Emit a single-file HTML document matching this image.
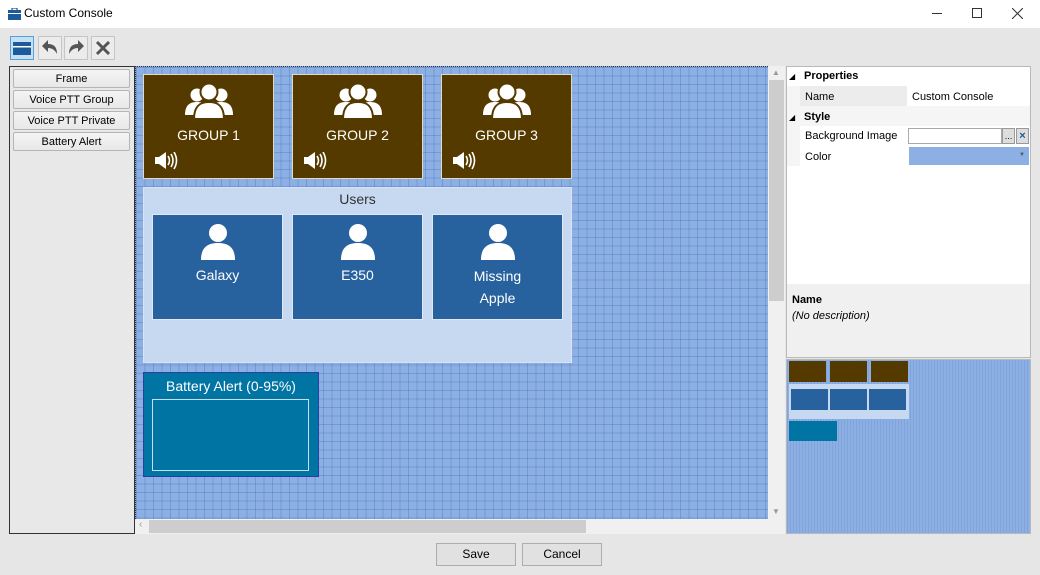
<!DOCTYPE html>
<html><head><meta charset="utf-8"><style>
*{box-sizing:border-box;margin:0;padding:0}
body{width:1040px;height:575px;background:#e6e6e6;font-family:"Segoe UI","Liberation Sans",sans-serif;position:relative;overflow:hidden;font-size:12px;color:#000}
.a{position:absolute}
.btnl{position:absolute;left:13px;width:117px;height:19px;background:linear-gradient(#f4f4f4,#e8e8e8);border:1px solid #b5b5b5;border-radius:2px;font-size:11px;text-align:center;line-height:19px}
.grp{position:absolute;top:74px;width:131px;height:105px;background:#553a00;border:1px solid #e0d8c8;color:#fff;text-align:center}
.grp .t{position:absolute;top:52px;left:0;right:0;font-size:14px}
.usr{position:absolute;top:214px;width:131px;height:106px;background:#27629f;border:1px solid #dfe8f4;color:#fff;text-align:center;font-size:14px}
.tb{position:absolute;top:36px;width:24px;height:24px;border:1px solid #c5c5c5;background:#ececec}
.grid{background-color:#8cb0e3;background-image:linear-gradient(rgba(80,115,195,.4) 1px,transparent 1px),linear-gradient(90deg,rgba(80,115,195,.4) 1px,transparent 1px);background-size:8.5px 8.5px}
.pb{position:absolute;width:80px;height:23px;top:543px;border:1px solid #adadad;background:#e1e1e1;font-size:12px;text-align:center;line-height:21px}
.p{font-size:11px}
</style></head><body>
<div class="a" style="left:0;top:0;width:1040px;height:28px;background:#fff"></div>
<svg class="a" style="left:8px;top:8px" width="13" height="12"><rect x="0" y="2" width="13" height="10" fill="#1d5a9a"/><rect x="4" y="0" width="5" height="3" fill="none" stroke="#1d5a9a" stroke-width="1.2"/><rect x="0" y="5" width="13" height="1" fill="#fff"/></svg>
<div class="a" style="left:24px;top:6px;font-size:12px">Custom Console</div>
<div class="a" style="left:932px;top:13px;width:10px;height:1px;background:#333"></div>
<div class="a" style="left:972px;top:8px;width:10px;height:10px;border:1px solid #333"></div>
<svg class="a" style="left:1012px;top:8px" width="11" height="11"><path d="M0 0L11 11M11 0L0 11" stroke="#333" stroke-width="1.1"/></svg>

<div class="tb" style="left:10px;background:#c4e0f5;border-color:#5a9fd6"><svg width="22" height="22"><rect x="2" y="5" width="18" height="13" fill="#1d5a9a"/><rect x="2" y="9" width="18" height="1.5" fill="#fff"/></svg></div>
<div class="tb" style="left:38px"><svg width="22" height="22"><path d="M3 9L9 3V7C15 7 18 10 18 17C16 13 13 11 9 11V15Z" fill="#555"/></svg></div>
<div class="tb" style="left:64px"><svg width="22" height="22"><path d="M19 9L13 3V7C7 7 4 10 4 17C6 13 9 11 13 11V15Z" fill="#555"/></svg></div>
<div class="tb" style="left:91px"><svg width="22" height="22"><path d="M5 5L17 17M17 5L5 17" stroke="#555" stroke-width="3"/></svg></div>

<div class="a" style="left:9px;top:66px;width:126px;height:468px;border:1px solid #333;background:#e8e8e8"></div>
<div class="btnl" style="top:69px">Frame</div>
<div class="btnl" style="top:90px">Voice PTT Group</div>
<div class="btnl" style="top:111px">Voice PTT Private</div>
<div class="btnl" style="top:132px">Battery Alert</div>

<div class="a grid" style="left:135px;top:66px;width:633px;height:453px;border-top:1px dotted #333;border-left:1px dotted #333"></div>
<div class="a" style="left:768px;top:66px;width:17px;height:453px;background:#f0f0f0"></div>
<div class="a" style="left:769px;top:80px;width:15px;height:221px;background:#cdcdcd"></div>
<div class="a" style="left:135px;top:519px;width:650px;height:15px;background:#f0f0f0"></div>
<div class="a" style="left:149px;top:520px;width:437px;height:13px;background:#cdcdcd"></div>
<div class="a" style="left:139px;top:519px;font-size:10px;color:#999">&lsaquo;</div>
<div class="a" style="left:772px;top:68px;font-size:8px;color:#999">&#9650;</div>
<div class="a" style="left:772px;top:507px;font-size:8px;color:#999">&#9660;</div>

<svg width="0" height="0" style="position:absolute"><defs>
<g id="gi"><circle cx="-12" cy="-5" r="6.5" fill="#fff"/><path d="M-24 15C-24 4-18 2-12 2S0 4 0 15Z" fill="#fff"/><circle cx="12" cy="-5" r="6.5" fill="#fff"/><path d="M0 15C0 4 6 2 12 2S24 4 24 15Z" fill="#fff"/><circle cx="0" cy="-8" r="8.5" stroke="#553a00" stroke-width="2" fill="#fff"/><path d="M-15 19C-15 5-8 2 0 2S15 5 15 19Z" stroke="#553a00" stroke-width="2" fill="#fff"/></g>
<g id="sp"><rect x="0" y="5" width="5" height="7" fill="#fff"/><path d="M4 5L11 0V17L4 12Z" fill="#fff"/><path d="M13 4Q16 8.5 13 13M16 2Q20 8.5 16 15M19 0Q24 8.5 19 17" stroke="#fff" stroke-width="1.6" fill="none"/></g>
<g id="ui"><circle cx="0" cy="-6" r="9" fill="#fff"/><path d="M-17 21C-17 8-10 4 0 4S17 8 17 21Z" fill="#fff"/></g>
</defs></svg>

<div class="grp" style="left:143px"><svg class="a" style="left:39px;top:6px" width="52" height="42"><use href="#gi" x="26" y="19"/></svg><div class="t">GROUP 1</div><svg class="a" style="left:11px;top:77px" width="25" height="18"><use href="#sp"/></svg></div>
<div class="grp" style="left:292px"><svg class="a" style="left:39px;top:6px" width="52" height="42"><use href="#gi" x="26" y="19"/></svg><div class="t">GROUP 2</div><svg class="a" style="left:11px;top:77px" width="25" height="18"><use href="#sp"/></svg></div>
<div class="grp" style="left:441px"><svg class="a" style="left:39px;top:6px" width="52" height="42"><use href="#gi" x="26" y="19"/></svg><div class="t">GROUP 3</div><svg class="a" style="left:11px;top:77px" width="25" height="18"><use href="#sp"/></svg></div>

<div class="a" style="left:143px;top:187px;width:429px;height:176px;background:#c6d9f1;border:1px solid #d8e4f4"></div>
<div class="a" style="left:143px;top:191px;width:429px;text-align:center;font-size:14px;color:#333">Users</div>
<div class="usr" style="left:152px"><svg class="a" style="left:45px;top:4px" width="40" height="46"><use href="#ui" x="20" y="20"/></svg><div class="a" style="top:52px;left:0;right:0">Galaxy</div></div>
<div class="usr" style="left:292px"><svg class="a" style="left:45px;top:4px" width="40" height="46"><use href="#ui" x="20" y="20"/></svg><div class="a" style="top:52px;left:0;right:0">E350</div></div>
<div class="usr" style="left:432px"><svg class="a" style="left:45px;top:4px" width="40" height="46"><use href="#ui" x="20" y="20"/></svg><div class="a" style="top:50px;left:0;right:0;line-height:22px">Missing<br>Apple</div></div>

<div class="a" style="left:143px;top:372px;width:176px;height:105px;background:#0075a3;border:1px solid #2a3fa0"></div>
<div class="a" style="left:143px;top:378px;width:176px;text-align:center;color:#fff;font-size:14px">Battery Alert (0-95%)</div>
<div class="a" style="left:152px;top:399px;width:157px;height:72px;border:1px solid #c8e0ee"></div>

<div class="a" style="left:786px;top:66px;width:245px;height:292px;background:#fff;border:1px solid #b9b9b9"></div>
<div class="a" style="left:787px;top:284px;width:243px;height:73px;background:#f0f0f0"></div>
<div class="a" style="left:789px;top:72px;font-size:8px">&#9698;</div>
<div class="a p" style="left:804px;top:70px;font-weight:bold">Properties</div>
<div class="a" style="left:787px;top:86px;width:243px;height:20px;background:#f5f5f5"></div>
<div class="a" style="left:800px;top:86px;width:107px;height:20px;background:#ececec"></div>
<div class="a" style="left:907px;top:86px;width:123px;height:20px;background:#fff"></div>
<div class="a p" style="left:805px;top:91px">Name</div>
<div class="a p" style="left:912px;top:91px">Custom Console</div>
<div class="a" style="left:787px;top:106px;width:243px;height:20px;background:#f5f5f5"></div>
<div class="a" style="left:789px;top:113px;font-size:8px">&#9698;</div>
<div class="a p" style="left:804px;top:111px;font-weight:bold">Style</div>
<div class="a" style="left:787px;top:126px;width:13px;height:40px;background:#f5f5f5"></div>
<div class="a p" style="left:805px;top:130px">Background Image</div>
<div class="a" style="left:908px;top:128px;width:94px;height:16px;border:1px solid #aaa;background:#fff"></div>
<div class="a" style="left:1002px;top:128px;width:13px;height:16px;border:1px solid #999;background:#ddd;font-size:9px;text-align:center;line-height:14px">...</div>
<div class="a" style="left:1016px;top:128px;width:13px;height:16px;border:1px solid #999;background:#ddd;color:#1d5a9a;font-size:11px;text-align:center;line-height:14px;font-weight:bold">&times;</div>
<div class="a p" style="left:805px;top:151px">Color</div>
<div class="a" style="left:909px;top:147px;width:120px;height:18px;background:#8cb0e3"></div>
<div class="a" style="left:1019px;top:152px;font-size:6px;color:#555">&#9660;</div>
<div class="a p" style="left:792px;top:294px;font-weight:bold">Name</div>
<div class="a p" style="left:792px;top:310px;font-style:italic">(No description)</div>

<div class="a" style="left:786px;top:359px;width:245px;height:175px;border:1px solid #b9b9b9;background:#8cb0e3;background-image:linear-gradient(90deg,rgba(90,125,200,.25) 1px,transparent 1px);background-size:3px 3px"></div>
<div class="a" style="left:789px;top:361px;width:37px;height:21px;background:#553a00"></div>
<div class="a" style="left:830px;top:361px;width:37px;height:21px;background:#553a00"></div>
<div class="a" style="left:871px;top:361px;width:37px;height:21px;background:#553a00"></div>
<div class="a" style="left:789px;top:384px;width:120px;height:35px;background:#c6d9f1"></div>
<div class="a" style="left:791px;top:389px;width:37px;height:21px;background:#27629f"></div>
<div class="a" style="left:830px;top:389px;width:37px;height:21px;background:#27629f"></div>
<div class="a" style="left:869px;top:389px;width:37px;height:21px;background:#27629f"></div>
<div class="a" style="left:789px;top:421px;width:48px;height:20px;background:#0075a3"></div>

<div class="pb" style="left:436px">Save</div>
<div class="pb" style="left:522px">Cancel</div>
</body></html>
